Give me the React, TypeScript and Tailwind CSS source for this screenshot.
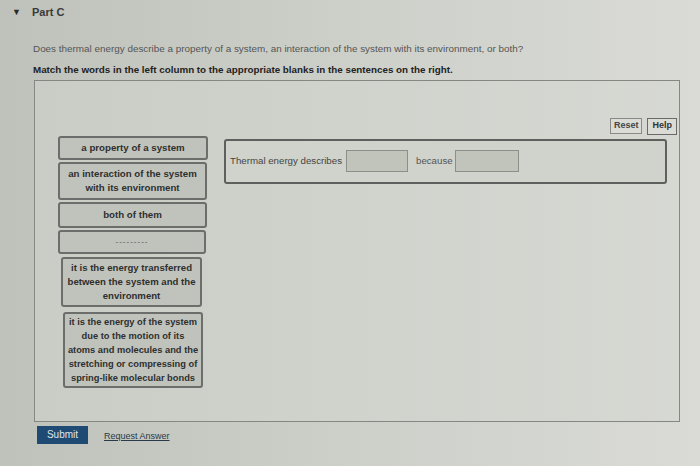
import React from "react";

const cards: { lines: string[]; h: string; mt: string; w: string; ml: string; fs: string }[] = [
  { lines: ["a property of a system"], h: "h-[24px]", mt: "mt-0", w: "w-[150px]", ml: "ml-0", fs: "text-[9.7px]" },
  { lines: ["an interaction of the system", "with its environment"], h: "h-[38px]", mt: "mt-[2px]", w: "w-[149px]", ml: "ml-0", fs: "text-[9.7px]" },
  { lines: ["both of them"], h: "h-[26px]", mt: "mt-[2px]", w: "w-[149px]", ml: "ml-0", fs: "text-[9.7px]" },
  { lines: ["---------"], h: "h-[24px]", mt: "mt-[2px]", w: "w-[148px]", ml: "ml-0", fs: "text-[8px]" },
  { lines: ["it is the energy transferred", "between the system and the", "environment"], h: "h-[50px]", mt: "mt-[3px]", w: "w-[141px]", ml: "ml-[3px]", fs: "text-[9.6px]" },
  { lines: ["it is the energy of the system", "due to the motion of its", "atoms and molecules and the", "stretching or compressing of", "spring-like molecular bonds"], h: "h-[76px]", mt: "mt-[5px]", w: "w-[140px]", ml: "ml-[5px]", fs: "text-[9.3px]" },
];

export default function App() {
  return (
    <div className="w-[700px] h-[466px] overflow-hidden bg-gradient-to-r from-[#bfc2bb] via-[#cdcfc9] to-[#dadbd6] text-[#2b2d2b] font-['Liberation_Sans',Arial,sans-serif]">
      <div className="flex items-center pt-[5px] pl-[12px] h-[20px]">
        <span className="text-[9px] text-[#2a2a2a] leading-none">▼</span>
        <span className="ml-[11px] text-[11px] font-bold text-[#3a3a3a]">Part C</span>
      </div>
      <div className="pl-[33px] mt-[24px] text-[9.9px] leading-none text-[#555]">
        Does thermal energy describe a property of a system, an interaction of the system with its environment, or both?
      </div>
      <div className="pl-[33px] mt-[11px] text-[9.8px] leading-none font-bold text-[#222]">
        Match the words in the left column to the appropriate blanks in the sentences on the right.
      </div>
      <div className="ml-[34px] mt-[5px] w-[646px] h-[342px] border border-[#858782] bg-[#d4d6d0]/50">
        <div className="flex justify-end gap-[5px] pr-[2px] pt-[37px]">
          <div className="h-[16px] px-[3px] border border-[#8a8a8a] bg-[#dcdcd7] text-[9px] font-bold text-[#444] flex items-center">Reset</div>
          <div className="h-[17px] px-[4px] border border-[#6a6a6a] bg-[#dcdcd7] text-[9px] font-bold text-[#333] flex items-center">Help</div>
        </div>
        <div className="flex mt-[1px]">
          <div className="pl-[23px] flex flex-col">
            {cards.map((c, i) => (
              <div
                key={i}
                className={`${c.h} ${c.mt} ${c.w} ${c.ml} ${c.fs} rounded-[3px] border-2 border-[#6c6e6b] bg-[#c0c3bc] flex flex-col items-center justify-center font-bold leading-[14px] text-[#2e2f2e]`}
              >
                {c.lines.map((l, j) => (
                  <div key={j} className={l === "---------" ? "text-[#555] font-normal tracking-[1px]" : "whitespace-nowrap"}>{l}</div>
                ))}
              </div>
            ))}
          </div>
          <div className="ml-[16px] mt-[3px] w-[443px] h-[45px] rounded-[3px] border-2 border-[#5e605d] bg-[#d0d3cc] flex items-center pl-[4px]">
            <span className="text-[9.7px] text-[#444]">Thermal energy describes</span>
            <div className="ml-[4px] w-[62px] h-[22px] border border-[#8c8f89] bg-[#c0c4ba]" />
            <span className="ml-[8px] text-[9.7px] text-[#555]">because</span>
            <div className="ml-[2px] w-[64px] h-[22px] border border-[#8c8f89] bg-[#c0c4ba]" />
          </div>
        </div>
      </div>
      <div className="flex items-center pl-[37px] mt-[4px]">
        <div className="w-[51px] h-[18px] bg-[#1f4a73] text-[#dfe6ee] text-[10px] flex items-center justify-center">Submit</div>
        <span className="ml-[16px] mt-[4px] text-[9px] text-[#2a3a4a] underline">Request Answer</span>
      </div>
    </div>
  );
}
